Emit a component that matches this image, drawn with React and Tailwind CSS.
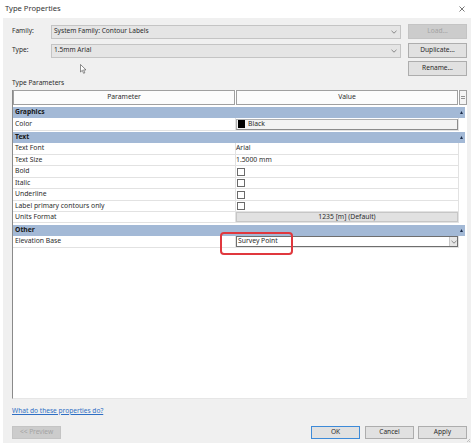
import React from 'react'

const FONT = "font-['Noto_Sans','Open_Sans',sans-serif]"

function Chevron({ className = '' }) {
  return (
    <svg width="6" height="4" viewBox="0 0 6 4" className={className}>
      <path d="M0.5 0.8 L3 3.2 L5.5 0.8" fill="none" stroke="#707070" strokeWidth="0.8" />
    </svg>
  )
}

function Combo({ value }) {
  return (
    <div className="w-[350px] h-[14px] bg-[#e5e5e5] border border-[#c4c4c4] flex items-center justify-between pl-[2px] pr-[3px]">
      <span className="text-[6.6px] text-[#2b2b2b] leading-none">{value}</span>
      <Chevron />
    </div>
  )
}

function Btn({ children, disabled, className = '' }) {
  return (
    <div
      className={`h-[15px] w-[59px] flex items-center justify-center text-[6.6px] leading-none border ${
        disabled ? 'bg-[#cccccc] border-[#c4c4c4] text-[#a3a3a3]' : 'bg-[#e1e1e1] border-[#adadad] text-[#2b2b2b]'
      } ${className}`}
    >
      {children}
    </div>
  )
}

function Band({ label, className = '' }) {
  return (
    <div className={`h-[11px] mr-[2px] bg-[#a3b9d6] flex items-center justify-between pl-[2px] pr-[2px] ${className}`}>
      <span className="text-[6.8px] font-bold text-[#1a1a1a] leading-none">{label}</span>
      <svg width="3" height="3" viewBox="0 0 3 3">
        <path d="M0 3 L1.5 0 L3 3 Z" fill="#1c2c4a" />
      </svg>
    </div>
  )
}

function Row({ label, h = 'h-[12px]', children }) {
  return (
    <div className={`${h} flex border-b border-[#e2e2e2] mr-[8px] border-r`}>
      <div className="w-[223px] shrink-0 border-r border-[#e2e2e2] flex items-center pl-[2px] text-[6.8px] text-[#2b2b2b] leading-none">
        {label}
      </div>
      <div className="flex-1 flex items-center text-[6.8px] text-[#2b2b2b] leading-none">{children}</div>
    </div>
  )
}

function Check() {
  return <div className="ml-[1px] w-[8px] h-[8px] bg-white border border-[#6a6a6a]" />
}

export default function App() {
  return (
    <div className={`${FONT} relative w-[474px] h-[447px] bg-white overflow-hidden`}>
      {/* title bar */}
      <div className="h-[18px] flex items-center justify-between pl-[5px] pr-[9px]">
        <span className="text-[7.6px] text-[#333] leading-none">Type Properties</span>
        <svg width="6" height="6" viewBox="0 0 6 6">
          <path d="M0.5 0.5 L5.5 5.5 M5.5 0.5 L0.5 5.5" stroke="#555" strokeWidth="0.8" />
        </svg>
      </div>

      {/* dialog body */}
      <div className="mx-[3px] h-[425px] bg-[#f0f0f0] pt-[6px] pl-[9px] pr-[4px] flex flex-col">
        <div className="h-[15px] flex items-center">
          <span className="w-[39px] text-[6.6px] text-[#2b2b2b] leading-none">Family:</span>
          <Combo value="System Family: Contour Labels" />
          <Btn disabled className="ml-[7px]">Load...</Btn>
        </div>
        <div className="mt-[4px] h-[15px] flex items-center">
          <span className="w-[39px] text-[6.6px] text-[#2b2b2b] leading-none">Type:</span>
          <Combo value="1.5mm Arial" />
          <Btn className="ml-[7px]">Duplicate...</Btn>
        </div>
        <div className="mt-[3px] h-[15px] flex justify-end">
          <Btn>Rename...</Btn>
        </div>

        <div className="mt-[2px] h-[10px] flex items-center text-[6.6px] text-[#2b2b2b] leading-none">Type Parameters</div>

        {/* parameters table */}
        <div className="mt-[2px] w-[455px] h-[309px] bg-white border-l border-[#8a8a8a] border-b border-b-[#e6e6e6] flex flex-col">
          <div className="h-[15px] flex gap-px">
            <div className="w-[222px] border border-[#a0a0a0] bg-[#fcfcfc] flex items-center justify-center text-[6.8px] text-[#2b2b2b] leading-none">
              Parameter
            </div>
            <div className="w-[222px] border border-[#a0a0a0] bg-[#fcfcfc] flex items-center justify-center text-[6.8px] text-[#2b2b2b] leading-none">
              Value
            </div>
            <div className="w-[8px] border border-[#a0a0a0] bg-[#f4f4f4] flex items-center justify-center">
              <div className="w-[4px] h-[3px] border-y border-[#909090]" />
            </div>
          </div>

          <Band label="Graphics" className="mt-[2px]" />
          <Row label="Color" h="h-[13px]">
            <div className="w-full h-[11px] bg-[#f3f3f3] border border-[#b0b0b0] border-r-[#8c8c8c] border-b-[#8c8c8c] flex items-center">
              <div className="w-[7px] h-[8px] bg-black ml-px" />
              <span className="ml-[3px]">Black</span>
            </div>
          </Row>

          <Band label="Text" className="mt-[1px]" />
          <Row label="Text Font">Arial</Row>
          <Row label="Text Size" h="h-[11px]">1.5000 mm</Row>
          <Row label="Bold"><Check /></Row>
          <Row label="Italic" h="h-[11px]"><Check /></Row>
          <Row label="Underline"><Check /></Row>
          <Row label="Label primary contours only" h="h-[11px]"><Check /></Row>
          <Row label="Units Format" h="h-[11px]">
            <div className="w-full h-[10px] bg-[#e1e1e1] border border-[#c6c6c6] flex items-center justify-center">
              1235 [m] (Default)
            </div>
          </Row>

          <Band label="Other" className="mt-[2px]" />
          <Row label="Elevation Base">
            <div className="w-full h-[11px] bg-white border border-[#6e6e6e] flex items-center justify-between">
              <span className="pl-px">Survey Point</span>
              <div className="w-[8px] h-[9px] bg-[#e6e6e6] border-l border-[#c8c8c8] flex items-center justify-center">
                <Chevron />
              </div>
            </div>
          </Row>
        </div>

        <div className="mt-[7px] h-[10px] flex items-center">
          <span className="text-[6.6px] text-[#2f6fc4] underline leading-none">What do these properties do?</span>
        </div>

        <div className="mt-[10px] h-[13px] flex items-center text-[6.6px] leading-none">
          <div className="w-[49px] h-[13px] bg-[#cccccc] border border-[#c4c4c4] text-[#a3a3a3] flex items-center justify-center">
            &lt;&lt; Preview
          </div>
          <div className="ml-auto w-[49px] h-[13px] bg-[#e1e1e1] border border-[#3d8ad8] text-[#2b2b2b] flex items-center justify-center">
            OK
          </div>
          <div className="ml-[5px] w-[49px] h-[13px] bg-[#e1e1e1] border border-[#adadad] text-[#2b2b2b] flex items-center justify-center">
            Cancel
          </div>
          <div className="ml-[4px] w-[49px] h-[13px] bg-[#e1e1e1] border border-[#adadad] text-[#2b2b2b] flex items-center justify-center">
            Apply
          </div>
        </div>
      </div>

      {/* mouse pointer */}
      <svg className="absolute left-[80px] top-[64px]" width="7" height="10" viewBox="0 0 7 10">
        <path d="M0.5 0.5 L0.5 8 L2.3 6.3 L3.6 9.3 L4.8 8.8 L3.6 5.9 L6 5.9 Z" fill="white" stroke="#444" strokeWidth="0.6" strokeLinejoin="round" />
      </svg>

      {/* red highlight */}
      <div className="absolute left-[220px] top-[232px] w-[73px] h-[23px] border-2 border-[#e0383e] rounded-[4px]" />

      {/* resize grip */}
      <svg className="absolute left-[466px] top-[438px]" width="5" height="5" viewBox="0 0 5 5">
        <path d="M4 1 L1 4 M4 3 L3 4" stroke="#a0a0a0" strokeWidth="0.6" />
      </svg>
    </div>
  )
}
